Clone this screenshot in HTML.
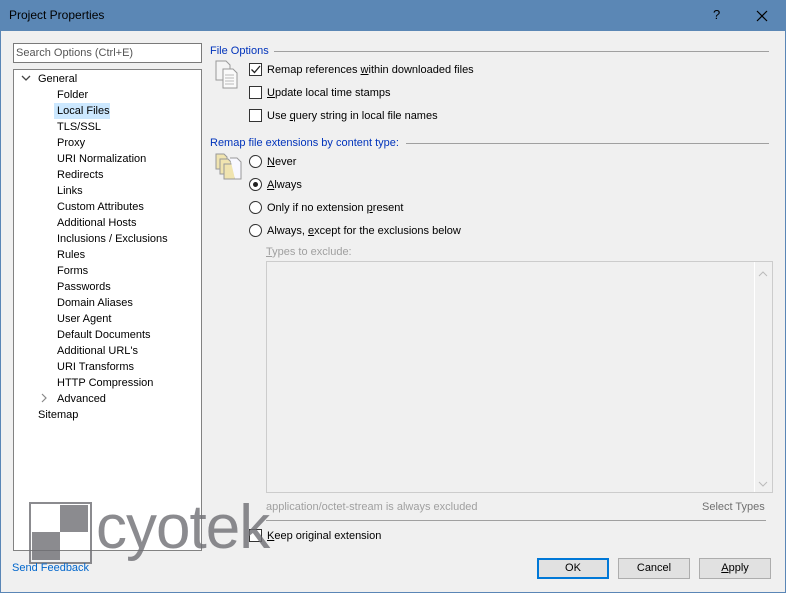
<!DOCTYPE html>
<html><head><style>
*{margin:0;padding:0;box-sizing:border-box}
body{width:786px;height:593px;overflow:hidden;background:#f0f0f0;font:11px/15px "Liberation Sans",sans-serif;color:#000;position:relative}
.a{position:absolute;white-space:nowrap}
.win{position:absolute;left:0;top:0;width:786px;height:593px;border:1px solid #5a86b6}
.title{position:absolute;left:0;top:0;width:786px;height:31px;background:#5b87b5}
.t{line-height:16px}
.cb{position:absolute;width:13px;height:13px;border:1px solid #333;background:#fff}
.rb{position:absolute;width:13px;height:13px;border:1px solid #333;border-radius:50%;background:#fff}
.btn{position:absolute;top:558px;width:72px;height:21px;border:1px solid #adadad;background:#e1e1e1;text-align:center;line-height:19px}
.blue{color:#0033bb}
</style></head><body>
<div class="win"></div>
<div class="title"></div>
<div class="a" style="left:9px;top:8px;font-size:12px">Project Properties</div>
<div class="a" style="left:713px;top:7px;font-size:13px">?</div>
<svg class="a" style="left:756px;top:10px" width="12" height="12"><path d="M1 1L11 11M11 1L1 11" stroke="#000" stroke-width="1.2"/></svg>

<div class="a" style="left:13px;top:43px;width:189px;height:20px;border:1px solid #7a7a7a;background:#fff;color:#555;padding:2px 2px;line-height:15px">Search Options (Ctrl+E)</div>
<div class="a" style="left:13px;top:69px;width:189px;height:482px;border:1px solid #828282;background:#fff"></div>
<svg class="a" style="left:21px;top:75px" width="10" height="8"><path d="M1 1L5 5L9 1" stroke="#444" fill="none" stroke-width="1.3"/></svg>
<svg class="a" style="left:41px;top:393px" width="8" height="10"><path d="M1 1L5 5L1 9" stroke="#888" fill="none" stroke-width="1.2"/></svg>
<div class="a t" style="left:38px;top:71px">General</div>
<div class="a" style="left:54px;top:103px;width:56px;height:16px;background:#cce8ff"></div>
<div class="a t" style="left:57px;top:87px">Folder<br>Local Files<br>TLS/SSL<br>Proxy<br>URI Normalization<br>Redirects<br>Links<br>Custom Attributes<br>Additional Hosts<br>Inclusions / Exclusions<br>Rules<br>Forms<br>Passwords<br>Domain Aliases<br>User Agent<br>Default Documents<br>Additional URL's<br>URI Transforms<br>HTTP Compression<br>Advanced</div>
<div class="a t" style="left:38px;top:407px">Sitemap</div>

<div class="a blue" style="left:210px;top:44px">File Options</div>
<div class="a" style="left:274px;top:51px;width:495px;height:1px;background:#a0a0a0"></div>
<svg class="a" style="left:214px;top:60px" width="30" height="30"><path d="M2 1h10l4 4v15H2z" fill="#f4f4f4" stroke="#999"/><path d="M9 9h10l4 4v15H9z" fill="#fafafa" stroke="#999"/><path d="M11 15h9M11 18h9M11 21h9M11 24h9" stroke="#bbb"/></svg>
<div class="cb" style="left:249px;top:63px"></div>
<svg class="a" style="left:250px;top:64px" width="11" height="11"><path d="M1.5 5.5L4.5 8.5L10 2" stroke="#222" fill="none" stroke-width="1.3"/></svg>
<div class="a" style="left:267px;top:63px">Remap references <u>w</u>ithin downloaded files</div>
<div class="cb" style="left:249px;top:86px"></div>
<div class="a" style="left:267px;top:86px"><u>U</u>pdate local time stamps</div>
<div class="cb" style="left:249px;top:109px"></div>
<div class="a" style="left:267px;top:109px">Use <u>q</u>uery string in local file names</div>

<div class="a blue" style="left:210px;top:136px">Remap file extensions by content type:</div>
<div class="a" style="left:406px;top:143px;width:363px;height:1px;background:#a0a0a0"></div>
<svg class="a" style="left:214px;top:153px" width="30" height="30"><path d="M2 1h8l3 3v12H2z" fill="#f0e4b0" stroke="#999"/><path d="M6 6h8l3 3v12H6z" fill="#f0e4b0" stroke="#999"/><path d="M10 11h8l3 3v12H10z" fill="#f0e4b0" stroke="#999"/><path d="M16 5h7l4 4v17h-6" fill="#f8f8ff" stroke="#999"/></svg>
<div class="rb" style="left:249px;top:155px"></div><div class="a" style="left:267px;top:155px"><u>N</u>ever</div>
<div class="rb" style="left:249px;top:178px"></div><div class="a" style="left:253px;top:182px;width:5px;height:5px;border-radius:50%;background:#222"></div><div class="a" style="left:267px;top:178px"><u>A</u>lways</div>
<div class="rb" style="left:249px;top:201px"></div><div class="a" style="left:267px;top:201px">Only if no extension <u>p</u>resent</div>
<div class="rb" style="left:249px;top:224px"></div><div class="a" style="left:267px;top:224px">Always, <u>e</u>xcept for the exclusions below</div>
<div class="a" style="left:266px;top:245px;color:#a0a0a0"><u>T</u>ypes to exclude:</div>
<div class="a" style="left:266px;top:261px;width:507px;height:232px;border:1px solid #ccc;background:#f0f0f0"></div>
<div class="a" style="left:754px;top:262px;width:1px;height:230px;background:#fff"></div>
<svg class="a" style="left:758px;top:270px" width="10" height="8"><path d="M1 6L5 2L9 6" stroke="#bbb" fill="none"/></svg>
<svg class="a" style="left:758px;top:480px" width="10" height="8"><path d="M1 2L5 6L9 2" stroke="#bbb" fill="none"/></svg>
<div class="a" style="left:266px;top:500px;color:#a0a0a0">application/octet-stream is always excluded</div>
<div class="a" style="left:702px;top:500px;color:#707070">Select Types</div>
<div class="a" style="left:266px;top:520px;width:500px;height:1px;background:#a0a0a0"></div>
<div class="cb" style="left:249px;top:529px"></div>
<div class="a" style="left:267px;top:529px"><u>K</u>eep original extension</div>

<div class="a" style="left:29px;top:502px;width:63px;height:62px;border:2px solid rgba(110,110,115,.8)"></div>
<div class="a" style="left:60px;top:505px;width:28px;height:27px;background:rgba(110,110,115,.8)"></div>
<div class="a" style="left:32px;top:532px;width:28px;height:28px;background:rgba(110,110,115,.8)"></div>
<div class="a" style="left:96px;top:497px;font-size:62px;line-height:62px;color:rgba(110,110,115,.8);letter-spacing:-1px">cyotek</div>
<div class="a" style="left:12px;top:561px;color:#0066cc">Send Feedback</div>

<div class="btn" style="left:537px;border:2px solid #0078d7;line-height:17px">OK</div>
<div class="btn" style="left:618px">Cancel</div>
<div class="btn" style="left:699px"><u>A</u>pply</div>
</body></html>
